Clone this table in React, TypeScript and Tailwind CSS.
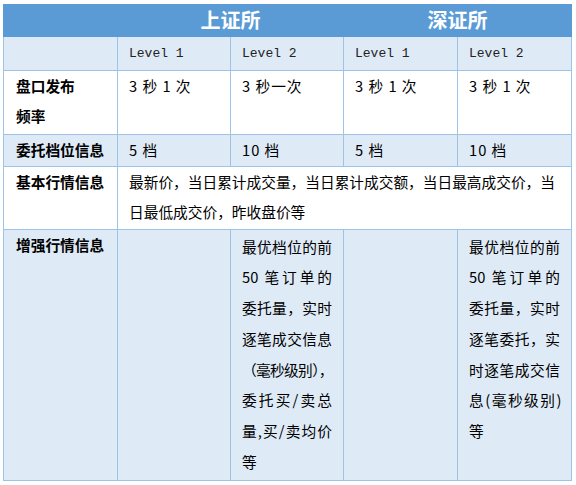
import React from "react";

const cjk = { fontFamily: '"Noto Sans CJK SC", sans-serif' };

// 每一行手动断开，两端对齐（最后一行除外）
const Lines: React.FC<{ lines: { text: string; tight?: string }[] }> = ({ lines }) => (
  <div>
    {lines.map((l, i) => (
      <div
        key={i}
        className={
          "whitespace-nowrap text-justify " +
          (i < lines.length - 1 ? "[text-align-last:justify] " : "") +
          (l.tight ?? "")
        }
      >
        {l.text}
      </div>
    ))}
  </div>
);

const sse = [
  { text: "最优档位的前" },
  { text: "50 笔订单的" },
  { text: "委托量，实时" },
  { text: "逐笔成交信息" },
  { text: "（毫秒级别），", tight: "tracking-[-1.5px]" },
  { text: "委托买/卖总" },
  { text: "量,买/卖均价" },
  { text: "等" },
];

const szse = [
  { text: "最优档位的前" },
  { text: "50 笔订单的" },
  { text: "委托量，实时" },
  { text: "逐笔委托，实" },
  { text: "时逐笔成交信" },
  { text: "息(毫秒级别)", tight: "tracking-[-1.5px]" },
  { text: "等" },
];

export default function App() {
  const td = "border border-[#9dc3e6] align-top pt-0 px-[11px]";
  const label = "border border-[#9dc3e6] align-top pt-0 pl-[12px] pr-[4px] font-bold";
  const level = "border border-[#9dc3e6] align-middle px-[11px] pt-[2px] text-[13px] text-[#222]";
  const num = "tracking-[1px]";

  return (
    <div className="bg-white w-[576px] h-[485px] pt-[4px] pl-[3px]" style={cjk}>
      <table className="table-fixed border-collapse w-[568px] text-[14.7px] leading-[30.7px] text-black">
        <colgroup>
          <col className="w-[114px]" />
          <col className="w-[113px]" />
          <col className="w-[113px]" />
          <col className="w-[114px]" />
          <col className="w-[114px]" />
        </colgroup>
        <tbody>
          <tr className="h-[32px] bg-[#5b9bd5] text-white text-[20px] font-bold">
            <td className="border border-[#5b9bd5]"></td>
            <td colSpan={2} className="border border-[#5b9bd5] text-center align-middle leading-none pb-[1px]">
              上证所
            </td>
            <td colSpan={2} className="border border-[#5b9bd5] text-center align-middle leading-none pb-[1px]">
              深证所
            </td>
          </tr>
          <tr className="h-[32px] bg-[#deeaf6]" style={{ fontFamily: '"Liberation Mono", monospace' }}>
            <td className={level}></td>
            <td className={level}>Level 1</td>
            <td className={level}>Level 2</td>
            <td className={level}>Level 1</td>
            <td className={level}>Level 2</td>
          </tr>
          <tr className="h-[64px] bg-white">
            <td className={label}>
              盘口发布
              <br />
              频率
            </td>
            <td className={td + " " + num}>3 秒 1 次</td>
            <td className={td + " " + num}>3 秒一次</td>
            <td className={td + " " + num}>3 秒 1 次</td>
            <td className={td + " " + num}>3 秒 1 次</td>
          </tr>
          <tr className="h-[32px] bg-[#deeaf6]">
            <td className={label}>委托档位信息</td>
            <td className={td + " " + num}>5 档</td>
            <td className={td + " " + num}>10 档</td>
            <td className={td + " " + num}>5 档</td>
            <td className={td + " " + num}>10 档</td>
          </tr>
          <tr className="h-[63px] bg-white">
            <td className={label}>基本行情信息</td>
            <td colSpan={4} className={td + " whitespace-nowrap"}>
              最新价，当日累计成交量，当日累计成交额，当日最高成交价，当
              <br />
              日最低成交价，昨收盘价等
            </td>
          </tr>
          <tr className="h-[251px] bg-[#deeaf6]">
            <td className={label}>增强行情信息</td>
            <td className={td}></td>
            <td className={td + " pt-[2px]"}>
              <Lines lines={sse} />
            </td>
            <td className={td}></td>
            <td className={td + " pt-[2px]"}>
              <Lines lines={szse} />
            </td>
          </tr>
        </tbody>
      </table>
    </div>
  );
}
